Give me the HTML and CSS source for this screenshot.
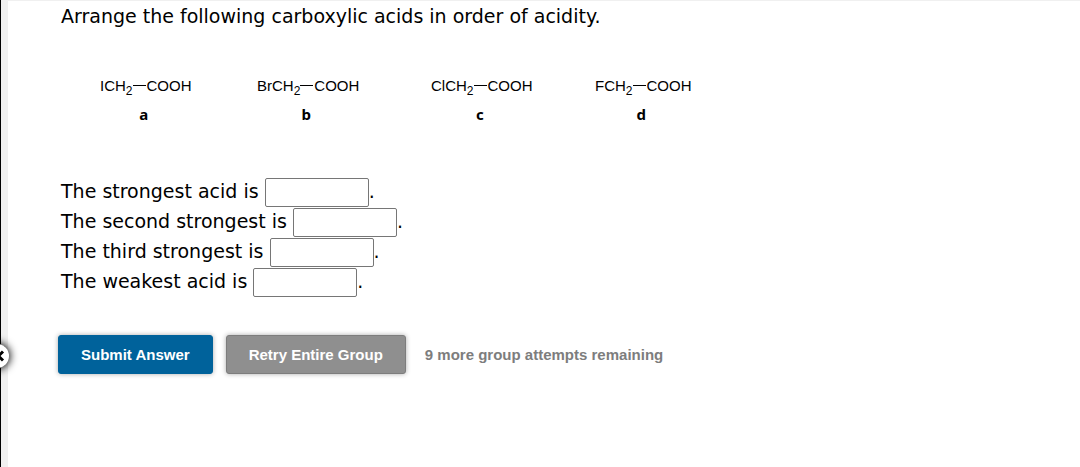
FILE: index.html
```html
<!DOCTYPE html>
<html lang="en">
<head>
    <meta charset="UTF-8">
    <meta name="viewport" content="width=device-width, initial-scale=1.0">
    <title>Carboxylic Acids</title>
    <link rel="stylesheet" href="styles.css">
</head>
<body>
    <aside class="rail">
        <button type="button" class="rail-toggle" aria-label="Collapse panel">
            <svg width="24" height="24" viewBox="0 0 24 24">
                <path d="M18 7.5 L13.5 12 L18 16.5" fill="none" stroke="#000" stroke-width="3"/>
            </svg>
        </button>
    </aside>

    <main class="question">
        <p class="prompt">Arrange the following carboxylic acids in order of acidity.</p>

        <div class="acids">
            <div class="acid">
                <div class="formula">ICH<sub>2</sub><span class="bond"></span>COOH</div>
                <b>a</b>
            </div>
            <div class="acid">
                <div class="formula">BrCH<sub>2</sub><span class="bond"></span>COOH</div>
                <b>b</b>
            </div>
            <div class="acid">
                <div class="formula">ClCH<sub>2</sub><span class="bond"></span>COOH</div>
                <b>c</b>
            </div>
            <div class="acid">
                <div class="formula">FCH<sub>2</sub><span class="bond"></span>COOH</div>
                <b>d</b>
            </div>
        </div>

        <form>
            <div class="answer">
                <label for="first">The strongest acid is</label>
                <input type="text" id="first">.
            </div>
            <div class="answer">
                <label for="second">The second strongest is</label>
                <input type="text" id="second">.
            </div>
            <div class="answer">
                <label for="third">The third strongest is</label>
                <input type="text" id="third">.
            </div>
            <div class="answer">
                <label for="weakest">The weakest acid is</label>
                <input type="text" id="weakest">.
            </div>

            <div class="actions">
                <button type="submit" class="btn submit">Submit Answer</button>
                <button type="button" class="btn retry">Retry Entire Group</button>
                <span class="attempts">9 more group attempts remaining</span>
            </div>
        </form>
    </main>
</body>
</html>
```
FILE: styles.css
```css
* { box-sizing: border-box; }
body {
    margin: 0;
    display: flex;
    min-height: 100vh;
    background: #fff;
    color: #000;
    font-family: Verdana, "DejaVu Sans", sans-serif;
    font-size: 19px;
}
.rail {
    position: relative;
    width: 8px;
    background: #f0f0f0;
    border-left: 1px solid #000;
}
/* round handle that sits over the rail, half off the window */
.rail-toggle {
    position: absolute;
    top: 344px;
    left: -16px;
    width: 24px;
    height: 24px;
    padding: 0;
    border: none;
    border-radius: 50%;
    background: #fff;
    box-shadow: 0 0 8px 1px #000;
    cursor: pointer;
}
.rail-toggle svg { display: block; }
.question {
    flex: 1;
    padding: 3px 50px 24px 53px;
    border-top: 1px solid #f0f0f0;
}
.prompt {
    margin: 0;
    line-height: 24px;
}
.acids {
    display: grid;
    grid-template-columns: 157px 174px 164px auto;
    margin: 48px 0 53px 39px;
    font-family: "Liberation Sans", Arial, sans-serif;
    font-size: 15px;
}
.acid {
    justify-self: start;
    text-align: center;
}
.formula {
    height: 28px;
    line-height: 20px;
    white-space: nowrap;
}
.formula sub {
    font-size: 12px;
    line-height: 1;
    vertical-align: -4px;
}
.bond {
    display: inline-block;
    width: 13px;
    margin-right: 1px;
    border-top: 1px solid #000;
    vertical-align: 5px;
}
.acid b {
    display: block;
    padding-right: 4px;
    font-family: "Noto Sans", sans-serif;
    font-size: 15px;
    line-height: 20px;
}
.answer {
    height: 30px;
    line-height: 28px;
}
.answer input {
    width: 104px;
    height: 29px;
    padding: 1px 4px;
    border: 1px solid #767676;
    border-radius: 2px;
    font: inherit;
    vertical-align: middle;
}
.actions {
    display: flex;
    align-items: center;
    gap: 13px;
    margin: 38px 0 0 -3px;
    font-family: "Liberation Sans", Arial, sans-serif;
    font-size: 15px;
    font-weight: bold;
}
.btn {
    height: 39px;
    padding: 0 22px;
    border: 1px solid #00629b;
    border-radius: 3px;
    background: #00629b;
    color: #fff;
    font: inherit;
    box-shadow: 0 0 5px #0005;
    cursor: pointer;
}
.btn.retry {
    background: #8f8f8f;
    border-color: #7d7d7d;
}
.attempts {
    margin-left: 6px;
    color: #7d7d7d;
}
```
